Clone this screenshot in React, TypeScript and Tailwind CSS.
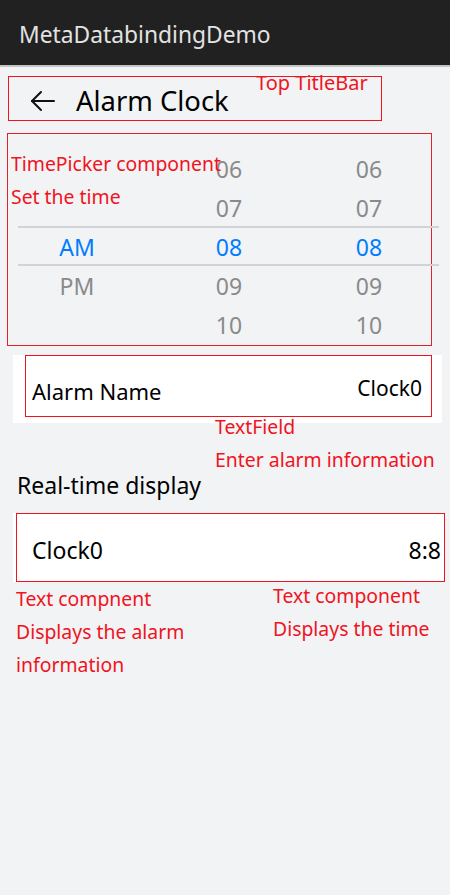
import React from 'react'

const red = 'text-[#f0141e]'
const font = { fontFamily: '"Noto Sans", "Open Sans", sans-serif' }

const hours = ['06', '07', '08', '09', '10']
const meridiem = ['', '', 'AM', 'PM', '']

function PickerCell({ value, active }: { value: string; active: boolean }) {
  return (
    <div className={`h-[39px] flex items-center justify-center text-[23px] ${active ? 'text-[#007dff]' : 'text-[#8a8a8a]'}`}>
      {value}
    </div>
  )
}

export default function App() {
  return (
    <div className="min-h-[895px] w-[450px] bg-[#f1f3f5]" style={font}>
      <div className="h-[67px] bg-[#212121] border-b-2 border-[#c4c4c4] flex items-center pl-[19px] pt-[5px]">
        <span className="text-[22.8px] text-[#e3e3e3]">MetaDatabindingDemo</span>
      </div>

      {/* title bar */}
      <div className="relative pt-[9px]">
        <div className="ml-[8px] w-[374px] h-[45px] border border-[#f0141e] flex items-center pl-[21px] gap-[20px] pt-[4px]">
          <svg width="26" height="22" viewBox="0 0 26 22" fill="none" stroke="#111" strokeWidth="2" strokeLinecap="round" strokeLinejoin="round">
            <path d="M2 11H24" />
            <path d="M11 2L2 11L11 20" />
          </svg>
          <span className="text-[27.4px] text-black">Alarm Clock</span>
        </div>
        <span className={`absolute left-[256px] top-[4px] text-[20px] leading-[24px] ${red}`}>Top TitleBar</span>
      </div>

      {/* time picker */}
      <div className="relative mt-[12px] ml-[7px] w-[425px] h-[213px] border border-[#e0222a] pt-[16px]">
        <div className="absolute left-[10px] top-[92px] w-[421px] h-[2px] bg-[#d2d3d6]" />
        <div className="absolute left-[10px] top-[130px] w-[421px] h-[2px] bg-[#d2d3d6]" />
        <div className="grid grid-cols-[138px_166px_114px]">
          <div>
            {meridiem.map((m, i) => (
              <PickerCell key={i} value={m} active={m === 'AM'} />
            ))}
          </div>
          <div>
            {hours.map((h) => (
              <PickerCell key={h} value={h} active={h === '08'} />
            ))}
          </div>
          <div>
            {hours.map((h) => (
              <PickerCell key={h} value={h} active={h === '08'} />
            ))}
          </div>
        </div>
        <div className={`absolute left-[3px] top-[13px] text-[19.4px] leading-[33px] ${red}`}>
          <div>TimePicker component</div>
          <div>Set the time</div>
        </div>
      </div>

      {/* text field */}
      <div className="mt-[9px] ml-[13px] w-[429px] h-[68px] bg-white pl-[12px]">
        <div className="w-[407px] h-[62px] border border-[#f0141e] flex items-center justify-between pl-[6px] pr-[9px] pt-[6px]">
          <span className="text-[22px] text-black mt-[4px]">Alarm Name</span>
          <span className="text-[21px] text-black">Clock0</span>
        </div>
      </div>
      <div className={`-mt-[13px] pl-[215px] text-[19.4px] leading-[33px] ${red}`}>
        <div>TextField</div>
        <div>Enter alarm information</div>
      </div>

      {/* real-time display */}
      <div className="pl-[17px] -mt-[2px] text-[23px] leading-[22px] text-black">Real-time display</div>
      <div className="mt-[17px] ml-[13px] w-[432px] h-[69px] bg-white pl-[3px]">
        <div className="h-[69px] border border-[#f0141e] flex items-center justify-between pl-[15px] pr-[3px] pt-[5px]">
          <span className="text-[23px] text-black">Clock0</span>
          <span className="text-[23px] text-black">8:8</span>
        </div>
      </div>
      <div className={`grid grid-cols-[257px_1fr] pl-[16px] text-[19.4px] leading-[33px] ${red}`}>
        <div>
          <div>Text compnent</div>
          <div>Displays the alarm</div>
          <div>information</div>
        </div>
        <div className="-mt-[3px]">
          <div>Text component</div>
          <div>Displays the time</div>
        </div>
      </div>
    </div>
  )
}
